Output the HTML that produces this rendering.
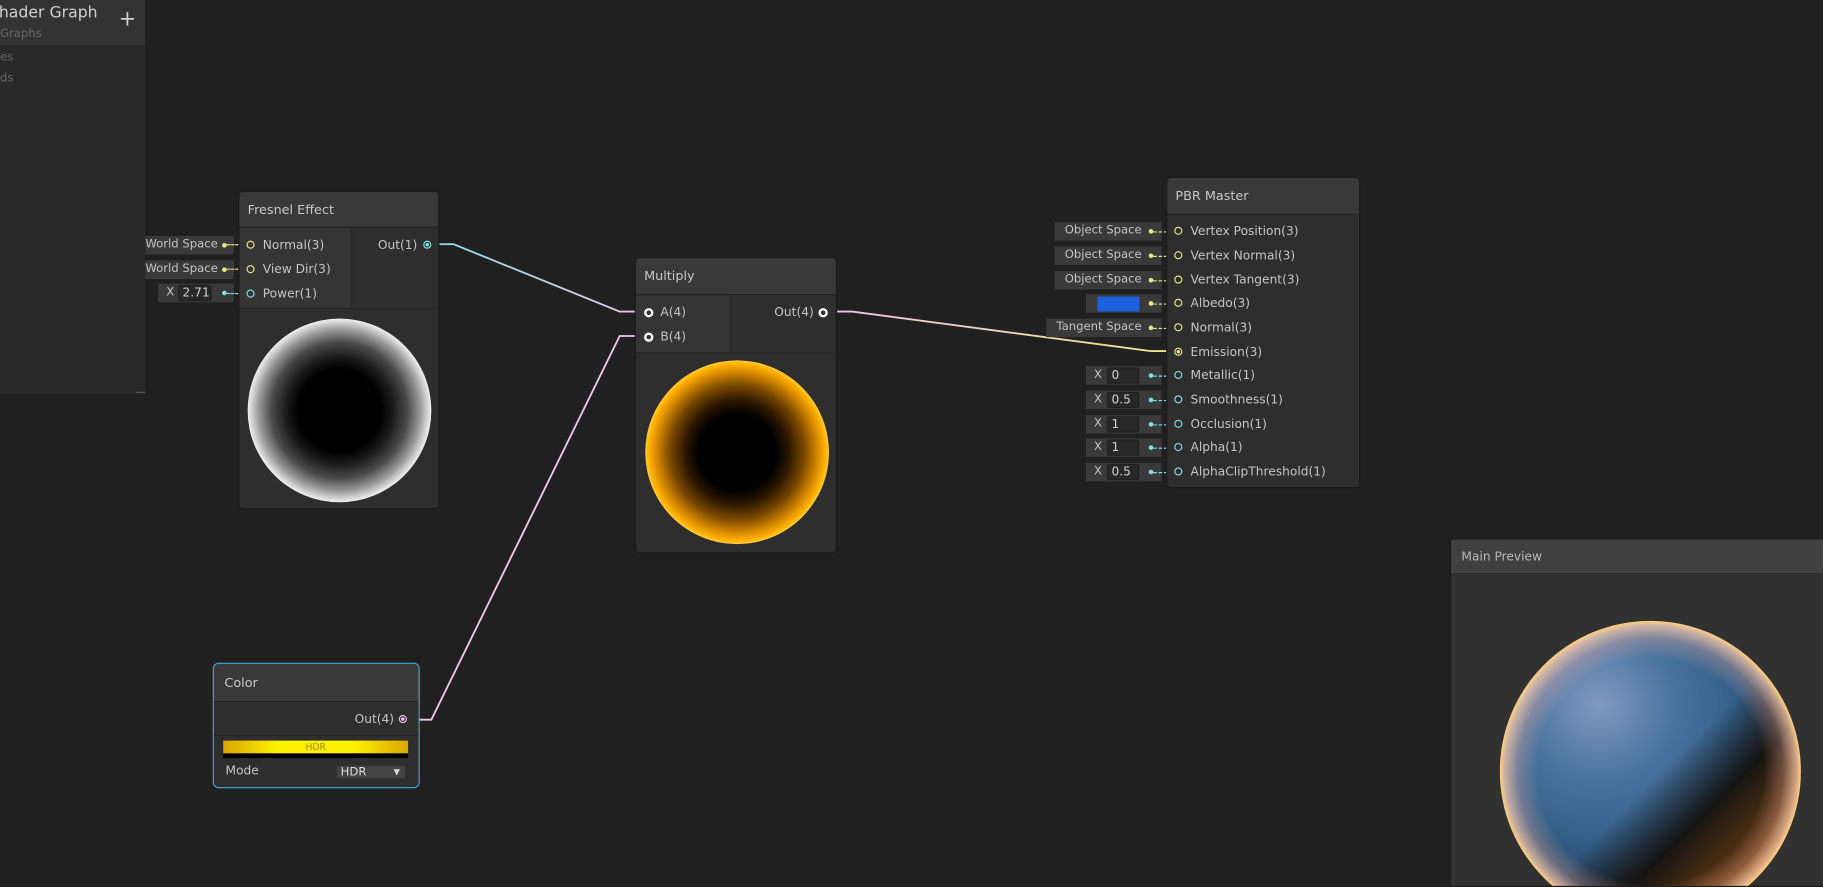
<!DOCTYPE html>
<html><head><meta charset="utf-8"><style>
*{margin:0;padding:0;box-sizing:border-box}
html,body{width:1823px;height:880px;overflow:hidden;background:#202020}
#w{position:absolute;left:0;top:0;width:1568px;height:757px;transform:scale(1.16263);transform-origin:0 0;font-family:"DejaVu Sans","Liberation Sans",sans-serif;font-size:10.5px;color:#c4c4c4}
.a{position:absolute}
.node{position:absolute;background:#2e2e2e;border-radius:4px;border:1px solid #1a1a1a;overflow:hidden}
.hd{position:absolute;left:0;right:0;top:0;background:#393939;border-bottom:1px solid #232323;color:#c8c8c8;font-size:11px;padding-left:7px}
.port{position:absolute;width:7px;height:7px;border-radius:50%;border:1.3px solid #e6e68a}
.cy{border-color:#84dde4}
.dot{position:absolute;width:4px;height:4px;border-radius:50%;background:#e6e68a}
.dc{background:#84dde4}
.box{position:absolute;background:#3a3a3a;height:16px;color:#c4c4c4;line-height:16px;text-align:right;padding-right:17px;white-space:nowrap;overflow:hidden;font-size:10px}
.fld{position:absolute;background:#282828;border:1px solid #202020;border-radius:2px;height:14px;line-height:12px;padding-left:3px;color:#d0d0d0}
.lbl{position:absolute;white-space:nowrap}
.xp{position:absolute;width:8px;height:8px;border-radius:50%;background:#fff}
.xp:after{content:"";position:absolute;left:2px;top:2px;width:4px;height:4px;border-radius:50%;background:#333}
</style></head><body><div id="w">
<svg class="a" style="left:0;top:0" width="1568" height="757">
<defs><linearGradient id="g1" x1="0" x2="1"><stop offset="0" stop-color="#84dde4"/><stop offset="1" stop-color="#f2c4e8"/></linearGradient>
<linearGradient id="g2" x1="0" x2="1"><stop offset="0" stop-color="#f2c4e8"/><stop offset="1" stop-color="#e6e68a"/></linearGradient></defs>
<polyline points="372,210 390,210 533,268 552,268" fill="none" stroke="url(#g1)" stroke-width="1.6"/>
<polyline points="352,619 371,619 533,289 552,289" fill="none" stroke="#f2c4e8" stroke-width="1.6"/>
<polyline points="713,268 733,268 990,302 1010,302" fill="none" stroke="url(#g2)" stroke-width="1.6"/>
</svg>

<div class="a" style="left:0;top:0;width:126px;height:339px;background:#292929;border-right:1px solid #1c1c1c">
 <div class="a" style="left:0;top:0;width:125px;height:40px;background:#333;border-bottom:1px solid #252525"></div>
 <div class="lbl" style="left:-1px;top:3px;font-size:13.5px;color:#cfcfcf">hader Graph</div>
 <div class="lbl" style="left:102px;top:6px;font-size:18px;color:#cfcfcf">+</div>
 <div class="lbl" style="left:0;top:24px;font-size:10px;color:#666">Graphs</div>
 <div class="lbl" style="left:0;top:44px;font-size:10px;color:#666">es</div>
 <div class="lbl" style="left:0;top:62px;font-size:10px;color:#666">ds</div>
 <div class="a" style="left:117px;top:337px;width:8px;height:1px;background:#555"></div>
</div>

<div class="box" style="left:125px;top:203px;width:76px">World Space</div>
<div class="dot" style="left:191px;top:209px"></div>
<div class="box" style="left:125px;top:224px;width:76px">World Space</div>
<div class="dot" style="left:191px;top:230px"></div>
<div class="box" style="left:136px;top:244px;width:65px;text-align:left;padding-left:7px">X</div>
<div class="fld" style="left:153px;top:245px;width:29px">2.71</div>
<div class="dot dc" style="left:191px;top:250px"></div>
<div class="a" style="left:195px;top:210px;width:10px;border-top:1px dashed #e6e68a"></div>
<div class="a" style="left:195px;top:231px;width:10px;border-top:1px dashed #e6e68a"></div>
<div class="a" style="left:195px;top:252px;width:10px;border-top:1px dashed #84dde4"></div>

<div class="node" style="left:205px;top:164px;width:173px;height:274px">
 <div class="hd" style="height:31px;line-height:31px">Fresnel Effect</div>
 <div class="a" style="left:0;top:31px;width:97px;height:70px;background:#353535;border-right:1px solid #262626"></div>
 <div class="a" style="left:0;top:100px;width:173px;height:1px;background:#262626"></div>
 <div class="port" style="left:6px;top:42px"></div><div class="lbl" style="left:20px;top:40px">Normal(3)</div>
 <div class="port" style="left:6px;top:63px"></div><div class="lbl" style="left:20px;top:61px">View Dir(3)</div>
 <div class="port cy" style="left:6px;top:84px"></div><div class="lbl" style="left:20px;top:82px">Power(1)</div>
 <div class="lbl" style="left:119px;top:40px">Out(1)</div>
 <div class="port cy" style="left:158px;top:42px;background:radial-gradient(#84dde4 40%,transparent 45%)"></div>
 <div class="a" style="left:7px;top:109px;width:158px;height:158px;border-radius:50%;background:radial-gradient(circle closest-side,#000 0,#000 45%,#1a1a1a 58%,#4a4a4a 74%,#9a9a9a 88%,#f0f0f0 100%)"></div>
</div>

<div class="node" style="left:546px;top:221px;width:174px;height:255px">
 <div class="hd" style="height:32px;line-height:32px">Multiply</div>
 <div class="a" style="left:0;top:32px;width:82px;height:49px;background:#353535;border-right:1px solid #262626"></div>
 <div class="a" style="left:0;top:81px;width:174px;height:1px;background:#262626"></div>
 <div class="xp" style="left:7px;top:43px"></div><div class="lbl" style="left:21px;top:41px">A(4)</div>
 <div class="xp" style="left:7px;top:64px"></div><div class="lbl" style="left:21px;top:62px">B(4)</div>
 <div class="lbl" style="left:119px;top:41px">Out(4)</div>
 <div class="xp" style="left:157px;top:43px"></div>
 <div class="a" style="left:8px;top:88px;width:158px;height:158px;border-radius:50%;background:radial-gradient(circle closest-side,#000 0,#000 42%,#2a1600 56%,#7a4800 73%,#d88a00 88%,#ffb000 96%,#ffd040 100%)"></div>
</div>

<div class="box" style="left:907px;top:191px;width:92px">Object Space</div>
<div class="box" style="left:907px;top:212px;width:92px">Object Space</div>
<div class="box" style="left:907px;top:233px;width:92px">Object Space</div>
<div class="box" style="left:934px;top:253px;width:65px"></div>
<div class="a" style="left:944px;top:255px;width:36px;height:13px;background:#1d62dc"></div>
<div class="box" style="left:900px;top:274px;width:99px">Tangent Space</div>
<div class="box" style="left:934px;top:315px;width:65px;text-align:left;padding-left:7px">X</div><div class="fld" style="left:952px;top:316px;width:28px">0</div>
<div class="box" style="left:934px;top:336px;width:65px;text-align:left;padding-left:7px">X</div><div class="fld" style="left:952px;top:337px;width:28px">0.5</div>
<div class="box" style="left:934px;top:357px;width:65px;text-align:left;padding-left:7px">X</div><div class="fld" style="left:952px;top:358px;width:28px">1</div>
<div class="box" style="left:934px;top:377px;width:65px;text-align:left;padding-left:7px">X</div><div class="fld" style="left:952px;top:378px;width:28px">1</div>
<div class="box" style="left:934px;top:398px;width:65px;text-align:left;padding-left:7px">X</div><div class="fld" style="left:952px;top:399px;width:28px">0.5</div>

<div class="dot" style="left:988px;top:197px"></div><div class="a" style="left:992px;top:199px;width:12px;border-top:1px dashed #e6e68a"></div>
<div class="dot" style="left:988px;top:218px"></div><div class="a" style="left:992px;top:220px;width:12px;border-top:1px dashed #e6e68a"></div>
<div class="dot" style="left:988px;top:239px"></div><div class="a" style="left:992px;top:241px;width:12px;border-top:1px dashed #e6e68a"></div>
<div class="dot" style="left:988px;top:259px"></div><div class="a" style="left:992px;top:261px;width:12px;border-top:1px dashed #e6e68a"></div>
<div class="dot" style="left:988px;top:280px"></div><div class="a" style="left:992px;top:282px;width:12px;border-top:1px dashed #e6e68a"></div>
<div class="dot dc" style="left:988px;top:321px"></div><div class="a" style="left:992px;top:323px;width:12px;border-top:1px dashed #84dde4"></div>
<div class="dot dc" style="left:988px;top:342px"></div><div class="a" style="left:992px;top:344px;width:12px;border-top:1px dashed #84dde4"></div>
<div class="dot dc" style="left:988px;top:363px"></div><div class="a" style="left:992px;top:365px;width:12px;border-top:1px dashed #84dde4"></div>
<div class="dot dc" style="left:988px;top:383px"></div><div class="a" style="left:992px;top:385px;width:12px;border-top:1px dashed #84dde4"></div>
<div class="dot dc" style="left:988px;top:404px"></div><div class="a" style="left:992px;top:406px;width:12px;border-top:1px dashed #84dde4"></div>

<div class="node" style="left:1003px;top:152px;width:167px;height:268px">
 <div class="hd" style="height:32px;line-height:32px">PBR Master</div>
 <div class="port" style="left:6px;top:42px"></div><div class="lbl" style="left:20px;top:40px">Vertex Position(3)</div>
 <div class="port" style="left:6px;top:63px"></div><div class="lbl" style="left:20px;top:61px">Vertex Normal(3)</div>
 <div class="port" style="left:6px;top:84px"></div><div class="lbl" style="left:20px;top:82px">Vertex Tangent(3)</div>
 <div class="port" style="left:6px;top:104px"></div><div class="lbl" style="left:20px;top:102px">Albedo(3)</div>
 <div class="port" style="left:6px;top:125px"></div><div class="lbl" style="left:20px;top:123px">Normal(3)</div>
 <div class="port" style="left:6px;top:146px;background:radial-gradient(#e6e68a 40%,transparent 45%)"></div><div class="lbl" style="left:20px;top:144px">Emission(3)</div>
 <div class="port cy" style="left:6px;top:166px"></div><div class="lbl" style="left:20px;top:164px">Metallic(1)</div>
 <div class="port cy" style="left:6px;top:187px"></div><div class="lbl" style="left:20px;top:185px">Smoothness(1)</div>
 <div class="port cy" style="left:6px;top:208px"></div><div class="lbl" style="left:20px;top:206px">Occlusion(1)</div>
 <div class="port cy" style="left:6px;top:228px"></div><div class="lbl" style="left:20px;top:226px">Alpha(1)</div>
 <div class="port cy" style="left:6px;top:249px"></div><div class="lbl" style="left:20px;top:247px">AlphaClipThreshold(1)</div>
</div>

<div class="a" style="left:183px;top:570px;width:178px;height:108px;border:1px solid #3fa9e0;border-radius:5px;background:#2e2e2e;overflow:hidden">
 <div class="hd" style="height:33px;line-height:33px;padding-left:9px">Color</div>
 <div class="a" style="left:0;top:33px;width:178px;height:29px;background:#2e2e2e;border-bottom:1px solid #252525"></div>
 <div class="lbl" style="left:121px;top:42px">Out(4)</div>
 <div class="port" style="left:159px;top:44px;border-color:#f2c4e8;background:radial-gradient(#f2c4e8 40%,transparent 45%)"></div>
 <div class="a" style="left:8px;top:66px;width:159px;height:11px;background:linear-gradient(90deg,#d9a600,#fff200 30%,#fff200 70%,#d9a600);font-size:8px;color:#9a8a30;text-align:center;line-height:11px">HDR</div>
 <div class="a" style="left:8px;top:77px;width:159px;height:4px;background:#000"></div>
 <div class="lbl" style="left:10px;top:86px;font-size:10.5px">Mode</div>
 <div class="a" style="left:105px;top:87px;width:60px;height:12px;background:#444;border:1px solid #333;font-size:10px;line-height:11px;padding-left:3px;color:#ddd">HDR<span style="position:absolute;right:4px;top:0;font-size:7px">▼</span></div>
</div>

<div class="a" style="left:1247px;top:463px;width:330px;height:300px;background:#313131;border-radius:3px 0 0 0;border:1px solid #1a1a1a;overflow:hidden">
 <div class="a" style="left:0;top:0;width:330px;height:30px;background:#404040;border-bottom:1px solid #2a2a2a;line-height:30px;padding-left:9px;color:#b8b8b8;font-size:10.5px">Main Preview</div>
 <div class="a" style="left:42px;top:70px;width:259px;height:259px;border-radius:50%;background:
 radial-gradient(circle closest-side,transparent 75%,rgba(255,180,160,.3) 88%,rgba(255,205,170,.75) 97%,#ffd080 100%),
 linear-gradient(135deg,transparent 52%,rgba(20,14,8,.9) 66%,rgba(110,60,10,.9) 82%,#d08018 95%),
 radial-gradient(circle at 33% 28%,#7f9ac0 0,#4a74a0 25%,#34608a 45%,#1e3550 70%,#151a20 100%)"></div>
</div>
</div></body></html>
